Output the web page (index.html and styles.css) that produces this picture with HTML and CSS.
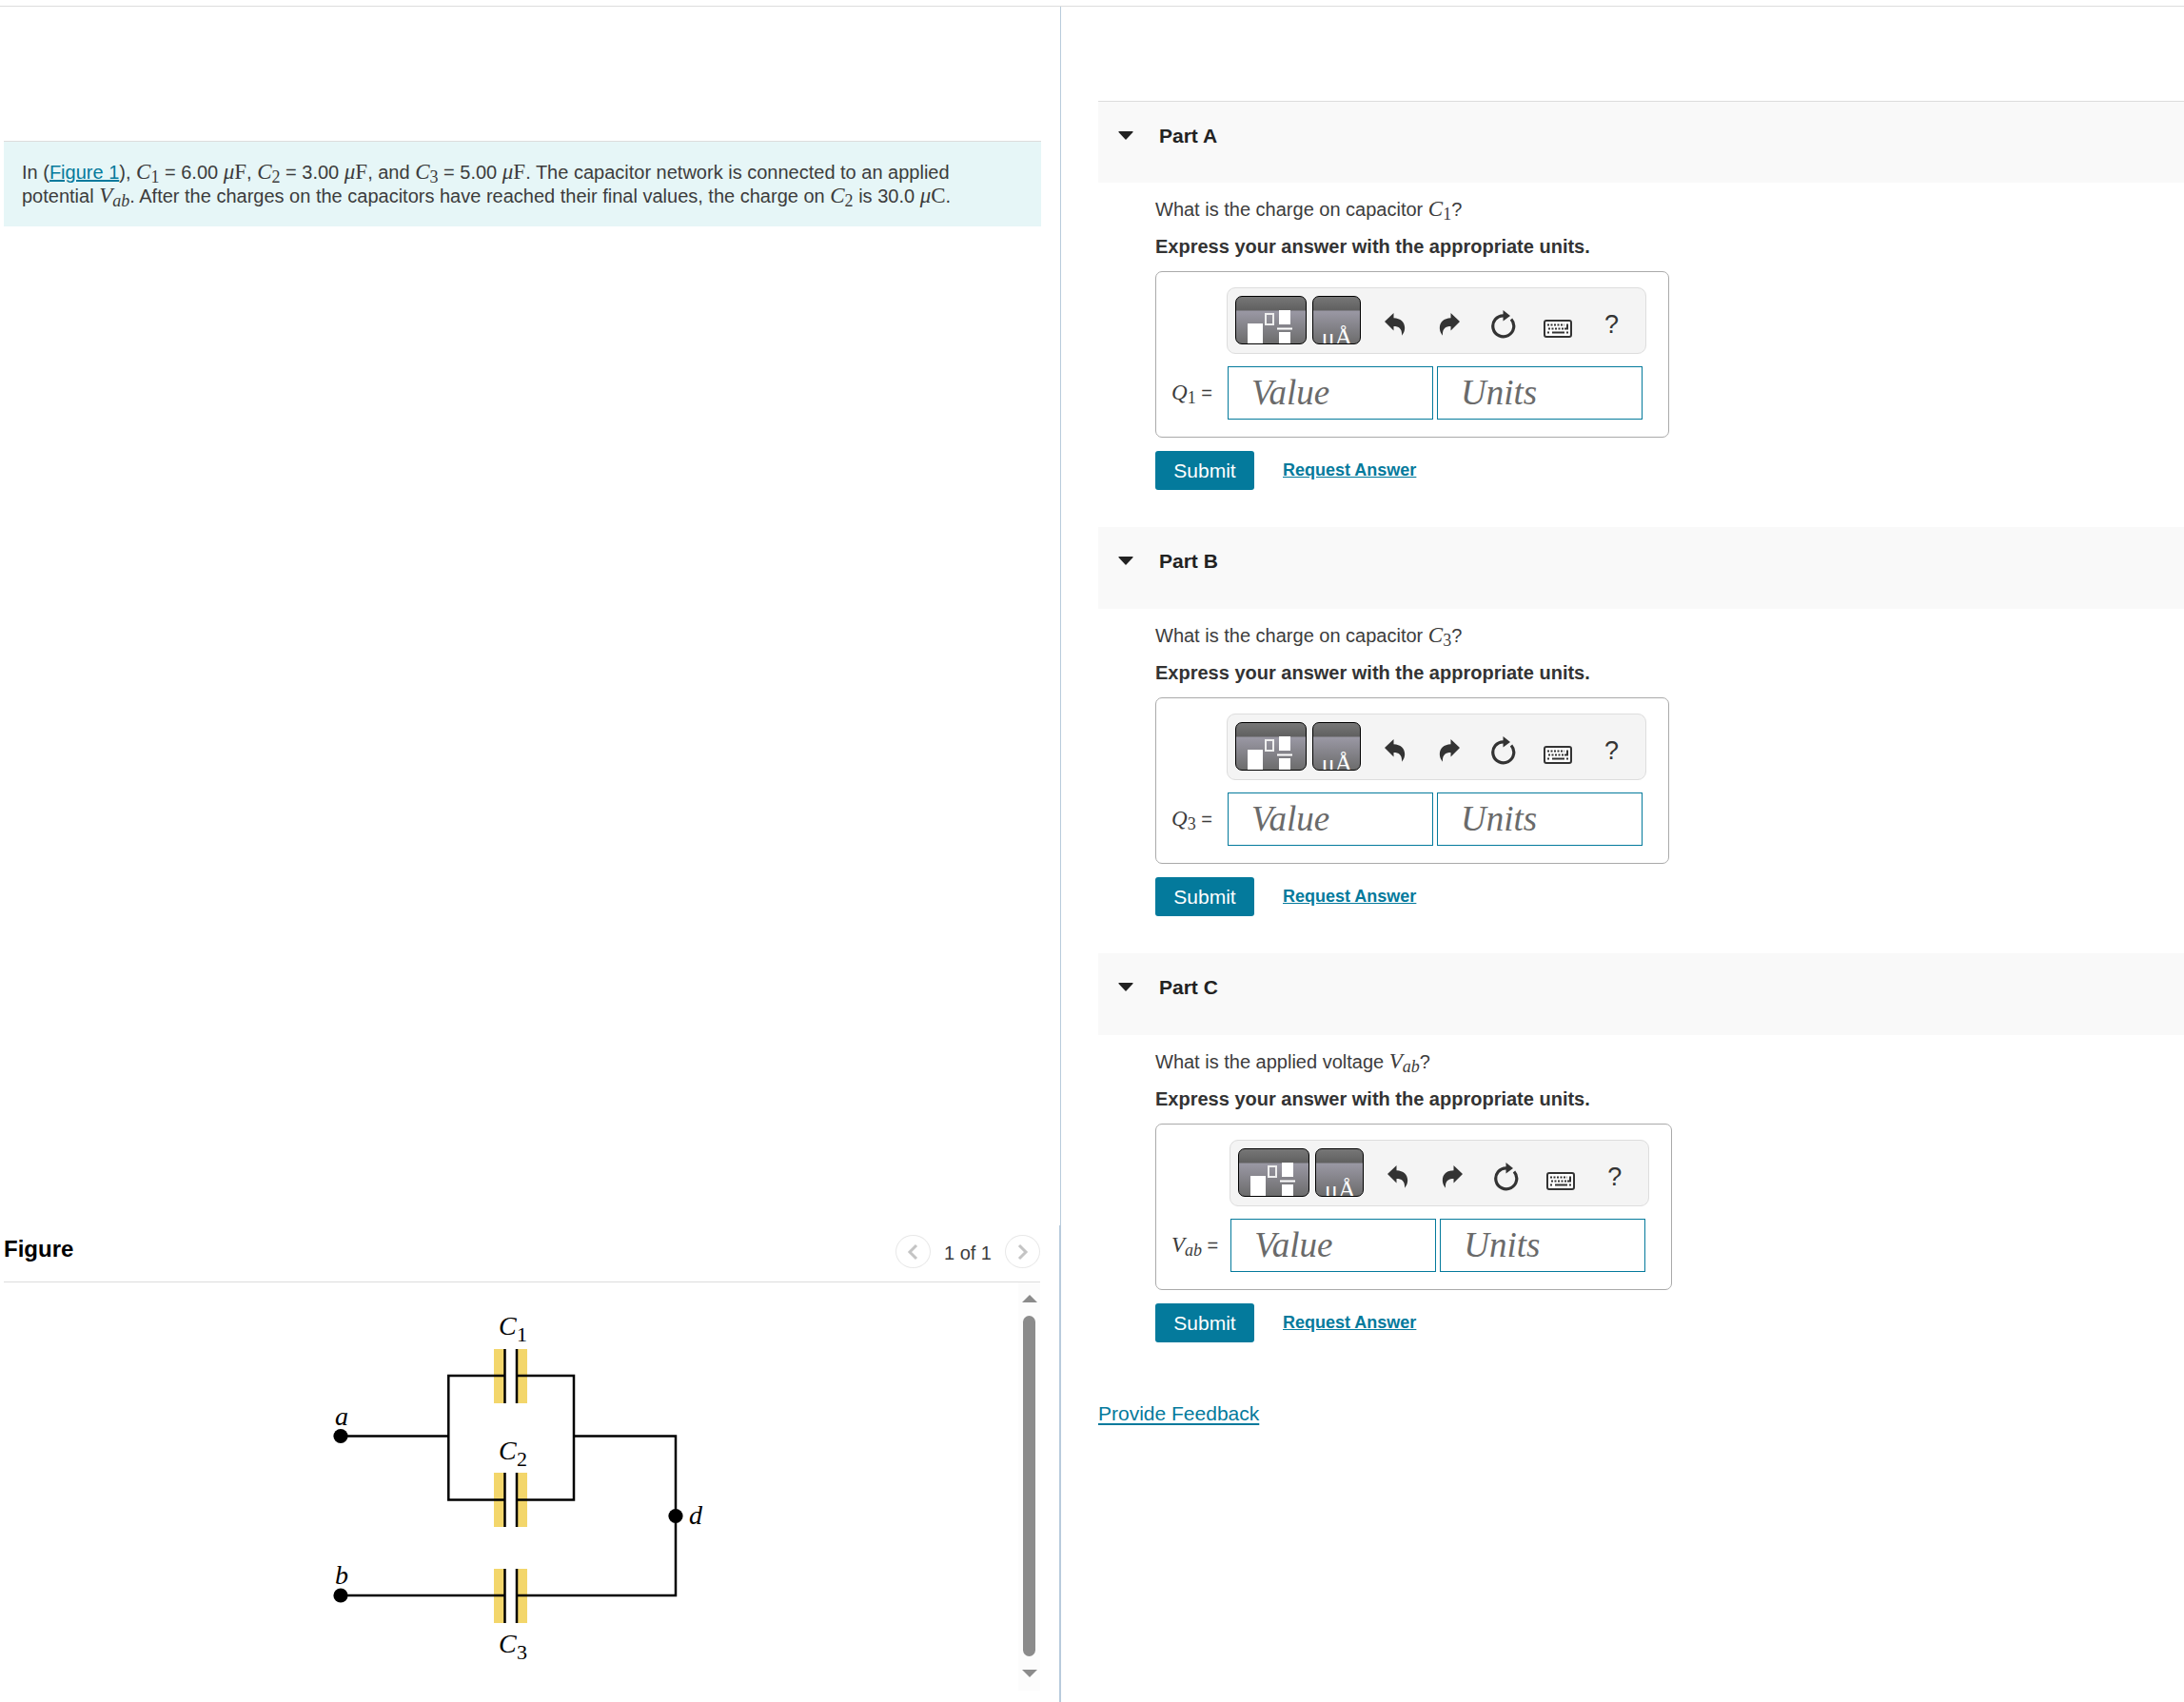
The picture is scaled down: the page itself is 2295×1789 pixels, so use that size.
FILE: index.html
```html
<!DOCTYPE html>
<html lang="en">
<head>
<meta charset="utf-8">
<title>Capacitor network</title>
<link rel="stylesheet" href="styles.css">
</head>
<body>
<svg class="sprite" aria-hidden="true">
  <symbol id="i-template" viewBox="0 0 75 51">
    <path d="M13 29h16v22H13zM46 15h12v15H46zM46 38h12v13H46z" fill="#fff"/>
    <path d="M44 34.500h16" stroke="#fff" stroke-width="2"/>
    <path d="M32 19h8v11h-8z" fill="none" stroke="#eee" stroke-width="2"/>
  </symbol>
  <symbol id="i-undo" viewBox="0 0 22 24">
    <path d="M9.500 0v5.200C18 5.500 22.500 11 20.800 18.500c-.5 2-1.600 3.800-2.800 5.200C18.500 17 15.500 14 9.500 14v4.500L0 9z" fill="#333"/>
  </symbol>
  <symbol id="i-redo" viewBox="0 0 22 24">
    <path d="M12.500 0v5.200C4 5.500-.500 11 1.200 18.500c.5 2 1.600 3.800 2.800 5.200C3.500 17 6.500 14 12.500 14v4.500L22 9z" fill="#333"/>
  </symbol>
  <symbol id="i-reset" viewBox="0 0 26 30">
    <path d="M21 9.500A11 11 0 1 1 13 5.800" fill="none" stroke="#333" stroke-width="3.200"/>
    <path d="M12.500 0l7.500 6-7.500 5.500z" fill="#333"/>
  </symbol>
  <symbol id="i-keyboard" viewBox="0 0 30 19">
    <rect x="1" y="1" width="28" height="17" rx="2" fill="#fff" stroke="#333" stroke-width="2"/>
    <path d="M4 5.500h18M5 9.500h16M4 13.500h3M24 13.500h2" stroke="#333" stroke-width="2" stroke-dasharray="2 1.500"/>
    <path d="M9 13.500h13M25 4.500v5h-3" stroke="#333" stroke-width="2" fill="none"/>
  </symbol>
</svg>

<div class="page">
  <div class="left">
    <section class="problem">
      <p class="intro">In (<a href="#figure">Figure 1</a>), <i class="m">C<sub class="n">1</sub></i> = 6.00 <i class="m">μ<b>F</b></i>, <i class="m">C<sub class="n">2</sub></i> = 3.00 <i class="m">μ<b>F</b></i>, and <i class="m">C<sub class="n">3</sub></i> = 5.00 <i class="m">μ<b>F</b></i>. The capacitor network is connected to an applied potential <i class="m">V<sub>ab</sub></i>. After the charges on the capacitors have reached their final values, the charge on <i class="m">C<sub class="n">2</sub></i> is 30.0 <i class="m">μ<b>C</b></i>.</p>
    </section>
    <section class="figure" id="figure">
      <header class="figure-head">
        <h2>Figure</h2>
        <button class="pager" type="button" aria-label="Previous figure"><svg width="12" height="18" viewBox="0 0 12 18"><path d="M10 2L3 9l7 7" fill="none" stroke="#c4c4c4" stroke-width="3"/></svg></button>
        <span class="count">1 of 1</span>
        <button class="pager" type="button" aria-label="Next figure"><svg width="12" height="18" viewBox="0 0 12 18"><path d="M2 2l7 7-7 7" fill="none" stroke="#c4c4c4" stroke-width="3"/></svg></button>
      </header>
      <div class="figure-body">
        <div class="canvas">
          <svg class="circuit" viewBox="0 0 434 400" width="434" height="400" role="img" aria-label="Capacitor network diagram">
            <g fill="#f3d66b">
              <path d="M199 58h35v57h-35zM199 188h35v57h-35zM199 289h35v57h-35z"/>
            </g>
            <path d="M211 58h12v57h-12zM211 188h12v57h-12zM211 289h12v57h-12z" fill="#fff"/>
            <g fill="none" stroke="#000" stroke-width="2.500">
              <path d="M38 149.500h113M210 86h-58.700v130.500H210M223 86h60v130.500h-60M283 149.500h107V317H223M38 317h172"/>
              <path d="M210.500 58v57M223 58v57M210.500 188v57M223 188v57M210.500 289v57M223 289v57"/>
            </g>
            <circle cx="38" cy="149.500" r="7.600"/><circle cx="38" cy="317" r="7.600"/><circle cx="390" cy="233.500" r="7.600"/>
            <g class="names">
              <text x="32" y="138">a</text><text x="32" y="305">b</text><text x="404" y="242">d</text>
              <text x="204" y="43">C</text><text x="204" y="174">C</text><text x="204" y="377">C</text>
            </g>
            <g class="subs"><text x="223" y="50">1</text><text x="223" y="181">2</text><text x="223" y="384">3</text></g>
          </svg>
        </div>
        <div class="track">
          <svg width="16" height="8" viewBox="0 0 16 8"><path d="M8 0l8 8H0z" fill="#8b8b8b"/></svg>
          <div class="thumb"></div>
          <svg width="16" height="8" viewBox="0 0 16 8"><path d="M8 8l8-8H0z" fill="#8b8b8b"/></svg>
        </div>
      </div>
    </section>
  </div>

  <main class="right">
    <section class="part">
      <header class="part-head first"><svg width="16" height="9" viewBox="0 0 16 9"><path d="M1 0h14q1 0 .5 1L8.500 8.500q-.5.500-1 0L.500 1Q0 0 1 0z" fill="#222"/></svg><h2>Part A</h2></header>
      <div class="part-body">
        <p class="question">What is the charge on capacitor <i class="m">C<sub class="n">1</sub></i>?</p>
        <p class="hint">Express your answer with the appropriate units.</p>
        <div class="answer">
          <label class="name" for="v1"><i class="m">Q<sub class="n">1</sub></i> =</label>
          <div class="entry">
            <div class="tools">
              <button class="dark wide" type="button" aria-label="Templates"><svg width="75" height="51"><use href="#i-template"/></svg></button>
              <button class="dark" type="button" aria-label="Units"><span>μÅ</span></button>
              <button class="tool" type="button" aria-label="Undo"><svg width="22" height="24"><use href="#i-undo"/></svg></button>
              <button class="tool" type="button" aria-label="Redo"><svg width="22" height="24"><use href="#i-redo"/></svg></button>
              <button class="tool" type="button" aria-label="Reset"><svg class="reset" width="26" height="30"><use href="#i-reset"/></svg></button>
              <button class="tool" type="button" aria-label="Keyboard"><svg class="keys" width="30" height="19"><use href="#i-keyboard"/></svg></button>
              <button class="tool" type="button">?</button>
            </div>
            <div class="fields"><input id="v1" type="text" placeholder="Value"><input type="text" placeholder="Units" aria-label="Units"></div>
          </div>
        </div>
        <div class="actions"><button class="submit" type="button">Submit</button><a href="#answer-a">Request Answer</a></div>
      </div>
    </section>

    <section class="part">
      <header class="part-head"><svg width="16" height="9" viewBox="0 0 16 9"><path d="M1 0h14q1 0 .5 1L8.500 8.500q-.5.500-1 0L.500 1Q0 0 1 0z" fill="#222"/></svg><h2>Part B</h2></header>
      <div class="part-body">
        <p class="question">What is the charge on capacitor <i class="m">C<sub class="n">3</sub></i>?</p>
        <p class="hint">Express your answer with the appropriate units.</p>
        <div class="answer">
          <label class="name" for="v2"><i class="m">Q<sub class="n">3</sub></i> =</label>
          <div class="entry">
            <div class="tools">
              <button class="dark wide" type="button" aria-label="Templates"><svg width="75" height="51"><use href="#i-template"/></svg></button>
              <button class="dark" type="button" aria-label="Units"><span>μÅ</span></button>
              <button class="tool" type="button" aria-label="Undo"><svg width="22" height="24"><use href="#i-undo"/></svg></button>
              <button class="tool" type="button" aria-label="Redo"><svg width="22" height="24"><use href="#i-redo"/></svg></button>
              <button class="tool" type="button" aria-label="Reset"><svg class="reset" width="26" height="30"><use href="#i-reset"/></svg></button>
              <button class="tool" type="button" aria-label="Keyboard"><svg class="keys" width="30" height="19"><use href="#i-keyboard"/></svg></button>
              <button class="tool" type="button">?</button>
            </div>
            <div class="fields"><input id="v2" type="text" placeholder="Value"><input type="text" placeholder="Units" aria-label="Units"></div>
          </div>
        </div>
        <div class="actions"><button class="submit" type="button">Submit</button><a href="#answer-b">Request Answer</a></div>
      </div>
    </section>

    <section class="part">
      <header class="part-head"><svg width="16" height="9" viewBox="0 0 16 9"><path d="M1 0h14q1 0 .5 1L8.500 8.500q-.5.500-1 0L.500 1Q0 0 1 0z" fill="#222"/></svg><h2>Part C</h2></header>
      <div class="part-body">
        <p class="question">What is the applied voltage <i class="m">V<sub>ab</sub></i>?</p>
        <p class="hint">Express your answer with the appropriate units.</p>
        <div class="answer">
          <label class="name" for="v3"><i class="m">V<sub>ab</sub></i> =</label>
          <div class="entry">
            <div class="tools">
              <button class="dark wide" type="button" aria-label="Templates"><svg width="75" height="51"><use href="#i-template"/></svg></button>
              <button class="dark" type="button" aria-label="Units"><span>μÅ</span></button>
              <button class="tool" type="button" aria-label="Undo"><svg width="22" height="24"><use href="#i-undo"/></svg></button>
              <button class="tool" type="button" aria-label="Redo"><svg width="22" height="24"><use href="#i-redo"/></svg></button>
              <button class="tool" type="button" aria-label="Reset"><svg class="reset" width="26" height="30"><use href="#i-reset"/></svg></button>
              <button class="tool" type="button" aria-label="Keyboard"><svg class="keys" width="30" height="19"><use href="#i-keyboard"/></svg></button>
              <button class="tool" type="button">?</button>
            </div>
            <div class="fields"><input id="v3" type="text" placeholder="Value"><input type="text" placeholder="Units" aria-label="Units"></div>
          </div>
        </div>
        <div class="actions"><button class="submit" type="button">Submit</button><a href="#answer-c">Request Answer</a></div>
      </div>
    </section>

    <a class="feedback" href="#feedback">Provide Feedback</a>
  </main>
</div>
</body>
</html>
```
FILE: styles.css
```css
* { box-sizing: border-box; }

body {
  margin: 0;
  padding-top: 6px;
  min-height: 100vh;
  display: flex;
  flex-direction: column;
  background: #fff;
  color: #3c3c3c;
  font: 20px/25px "Liberation Sans", Arial, sans-serif;
}

p, h2 { margin: 0; }
a { color: #047a9c; }
svg { display: block; }
button { font-family: inherit; padding: 0; cursor: pointer; }
.sprite { position: absolute; width: 0; height: 0; }

.page {
  flex: 1;
  display: grid;
  grid-template-columns: minmax(0, 1115fr) minmax(0, 1180fr);
  border-top: 1px solid #ddd;
}

/* maths set inside running text */
.m {
  font-family: "Liberation Serif", "Times New Roman", serif;
  font-size: 23px;
  line-height: 0;
}
.m b { font-weight: 400; font-style: normal; }
.m sub { font-size: 18px; line-height: 0; vertical-align: -4px; }
.m .n { font-style: normal; }

/* left column */
.left { display: flex; flex-direction: column; }
.problem { flex: 1; padding: 141px 20px 40px 4px; border-right: 1px solid #b8cbdc; }
.intro {
  min-height: 90px;
  padding: 20px 80px 19px 19px;
  border-top: 1px solid #ddd;
  background: #e6f6f7;
}

.figure { padding: 0 20px 12px 4px; border-right: 2px solid #b8cbdc; }
.figure-head {
  display: flex;
  align-items: center;
  height: 60px;
  padding-bottom: 6px;
  border-bottom: 1px solid #ddd;
}
.figure-head h2 { flex: 1; padding-bottom: 3px; color: #000; font-size: 24px; line-height: 28px; }
.count { margin: 6px 14px 0; }
.pager {
  display: flex;
  align-items: center;
  justify-content: center;
  width: 37px;
  height: 35px;
  margin-top: 2px;
  border: 1px solid #e8e8e8;
  border-radius: 50%;
  background: #fff;
}

.figure-body { display: flex; height: 429px; }
.canvas { flex: 1; display: flex; justify-content: center; padding-top: 12px; }
.names, .subs { font-family: "Liberation Serif", "Times New Roman", serif; }
.names { font-size: 28px; font-style: italic; }
.subs { font-size: 22px; }
.track {
  display: flex;
  flex-direction: column;
  align-items: center;
  gap: 14px;
  width: 23px;
  padding: 13px 0 14px;
  background: #fcfcfc;
}
.thumb { flex: 1; width: 13px; border-radius: 7px; background: #8b8b8b; }

/* right column */
.right { padding: 99px 0 40px 39px; }
.part { margin-bottom: 39px; }
.part-head {
  display: flex;
  align-items: center;
  gap: 27px;
  height: 86px;
  padding: 0 20px 15px 21px;
  background: #f9f9f9;
}
.part-head.first { border-top: 1px solid #ddd; }
.part-head h2 { color: #222; font-size: 21px; line-height: 25px; }
.part-body { padding: 16px 20px 0 60px; }
.question { margin-bottom: 14px; }
.hint { margin-bottom: 13px; color: #333; font-weight: 700; }

.answer {
  display: flex;
  width: fit-content;
  min-height: 175px;
  padding: 16px 23px 0 16px;
  border: 1px solid #aaa;
  border-radius: 7px;
}
.name { min-width: 58px; padding: 99px 12px 0 0; white-space: nowrap; }
.tools {
  display: flex;
  gap: 6px;
  width: 441px;
  height: 70px;
  padding: 8px;
  border: 1px solid #ddd;
  border-radius: 9px;
  background: #f4f4f4;
}
.dark {
  width: 51px;
  height: 51px;
  overflow: hidden;
  border: 1px solid #000;
  border-radius: 7px;
  background: linear-gradient(#777, #606060 14px, #9a98a4 15px, #6c6c6c);
  color: #fff;
  font: 26px/30px "Liberation Serif", "Times New Roman", serif;
}
.dark.wide { width: 75px; }
.dark svg { margin: -1px; }
.dark span { display: block; height: 49px; padding: 28px 0 0 1px; }
.tool {
  display: flex;
  justify-content: center;
  align-items: center;
  width: 33px;
  height: 59px;
  padding-top: 1px;
  border: 0;
  background: none;
  color: #333;
  font-size: 27px;
}
.wide + .dark { margin-right: 13px; }
.tool + .tool { margin-left: 18px; }
.keys { margin-top: 8px; }

.fields { display: flex; gap: 4px; margin-top: 13px; padding-left: 1px; }
.fields input {
  width: 216px;
  height: 56px;
  padding: 0 20px 2px 24px;
  border: 1px solid #047a9c;
  border-radius: 0;
  font: italic 37px/42px "Liberation Serif", "Times New Roman", serif;
}
.fields input::placeholder { color: #6a6a6a; opacity: 1; }

.actions { display: flex; gap: 30px; margin-top: 14px; font-size: 18px; }
.actions a { padding-top: 8px; font-weight: 700; }
.submit {
  width: 104px;
  height: 41px;
  border: 0;
  border-radius: 3px;
  background: #047a9c;
  color: #fff;
  font-size: 21px;
}
.feedback {
  display: inline-block;
  margin-top: 23px;
  font-size: 21px;
  text-decoration-thickness: 2px;
  text-underline-offset: 3px;
}
```
